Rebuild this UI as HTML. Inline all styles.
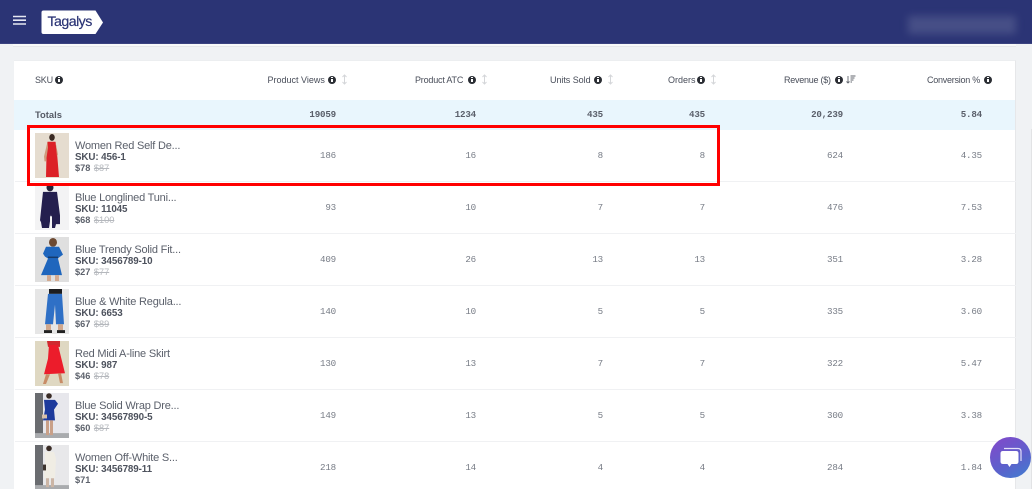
<!DOCTYPE html>
<html><head><meta charset="utf-8">
<style>
*{box-sizing:border-box}
html,body{margin:0;padding:0;width:1032px;height:489px;overflow:hidden}
body{background:#f0f2f4;font-family:"Liberation Sans",sans-serif}
#w{left:0;top:0;width:1032px;height:489px;overflow:hidden;background:#f0f2f4;filter:blur(.3px)}
div,svg{position:absolute}
.t{white-space:nowrap;line-height:12px}
.h{font-size:9px;color:#484d59;top:73.500px;height:12px}
.m{font-family:"Liberation Mono",monospace;font-size:9.2px;letter-spacing:-.2px;text-align:right;width:60px;color:#777c86}
.b{font-weight:bold;color:#5a5f6a}
.n{left:75px;font-size:11px;letter-spacing:-.2px;color:#5b606b}
.s{left:75px;font-size:9.8px;font-weight:bold;letter-spacing:-.1px;color:#4d525d}
.p{left:75px;font-size:9.2px;font-weight:bold;color:#5d626c}
.p span{font-weight:normal;color:#b5b8bd;text-decoration:line-through;margin-left:1px}
.sep{left:15px;width:1001px;height:1px;background:#f0f1f3}
.im{left:35px;width:34px;height:45px;filter:blur(.3px)}
.i{width:8px;height:8px;border-radius:50%;background:#2a2d33;top:75.500px}
.i:after{content:"";position:absolute;left:3.2px;top:3.2px;width:1.6px;height:3.2px;background:#fff}
.i:before{content:"";position:absolute;left:3.2px;top:1.2px;width:1.6px;height:1.3px;background:#fff}
.a{top:74px;width:7px;height:11px}
</style></head><body>
<div id="w">

<div style="left:13px;top:44px;width:1003px;height:3px;background:#f8f9f9;border-bottom:1px solid #e6e7e9"></div>
<div style="left:0;top:0;width:1032px;height:44px;background:#2b3475;border-bottom:1px solid #3b4380"></div>

<svg style="left:13px;top:15px" width="13" height="11" viewBox="0 0 13 11"><path d="M0 1.500H13M0 5.200H13M0 9H13" fill="none" stroke="#e6e8f2" stroke-width="1.600"/></svg>

<svg style="left:41px;top:10px" width="63" height="25" viewBox="0 0 63 25"><path d="M2.500 0.500H54.500L62 12.500L54.500 24H2.500Q0.500 24 0.500 22V2.500Q0.500 0.500 2.500 0.500Z" fill="#fff"/></svg>
<div class="t" style="left:47.500px;top:13px;font-size:14.200px;letter-spacing:-.55px;line-height:18px;color:#2b3475;-webkit-text-stroke:.2px #2b3475">Tagalys</div>

<div style="left:908px;top:16px;width:108px;height:18px;background:#525a8e;filter:blur(4px);opacity:.7"></div>

<div style="left:14px;top:60px;width:1002px;height:429px;background:#fff;border-right:1px solid #e6e7e9;border-top:1px solid #eceef0"></div>
<div style="left:14px;top:100px;width:1001px;height:30px;background:#e9f6fd"></div>
<div style="left:1031px;top:129px;width:1px;height:360px;background:#e2e3e5"></div>

<div class="t h" style="left:35px;letter-spacing:-.2px">SKU</div><div class="i" style="left:55px"></div>
<div class="t h" style="left:267.500px">Product Views</div><div class="i" style="left:328px"></div>
<div class="t h" style="left:415px;letter-spacing:-.2px">Product ATC</div><div class="i" style="left:468px"></div>
<div class="t h" style="left:550px;letter-spacing:-.05px">Units Sold</div><div class="i" style="left:594px"></div>
<div class="t h" style="left:668px">Orders</div><div class="i" style="left:697px"></div>
<div class="t h" style="left:784px;letter-spacing:-.25px">Revenue ($)</div><div class="i" style="left:835px"></div>
<div class="t h" style="left:927px;letter-spacing:-.25px">Conversion %</div><div class="i" style="left:984px"></div>

<svg class="a" style="left:341px" viewBox="0 0 7 11"><path d="M3.500 1V10M1.500 3L3.500 1L5.500 3M1.500 8L3.500 10L5.500 8" fill="none" stroke="#d4d6d9" stroke-width="1"/></svg>
<svg class="a" style="left:481px" viewBox="0 0 7 11"><path d="M3.500 1V10M1.500 3L3.500 1L5.500 3M1.500 8L3.500 10L5.500 8" fill="none" stroke="#d4d6d9" stroke-width="1"/></svg>
<svg class="a" style="left:607px" viewBox="0 0 7 11"><path d="M3.500 1V10M1.500 3L3.500 1L5.500 3M1.500 8L3.500 10L5.500 8" fill="none" stroke="#d4d6d9" stroke-width="1"/></svg>
<svg class="a" style="left:710px" viewBox="0 0 7 11"><path d="M3.500 1V10M1.500 3L3.500 1L5.500 3M1.500 8L3.500 10L5.500 8" fill="none" stroke="#d4d6d9" stroke-width="1"/></svg>
<svg style="left:846px;top:75px" width="10" height="9" viewBox="0 0 10 9"><path d="M2 1V8M0.500 6.500L2 8L3.500 6.500M4.500 1H9.500M4.500 3H8.500M4.500 5H7.500M4.500 7H6" fill="none" stroke="#62666e" stroke-width=".9"/></svg>

<div class="t" style="left:35px;top:109px;font-size:9.4px;font-weight:bold;color:#555a65">Totals</div>
<div class="t m b" style="left:276px;top:109px">19059</div>
<div class="t m b" style="left:416px;top:109px">1234</div>
<div class="t m b" style="left:543px;top:109px">435</div>
<div class="t m b" style="left:645px;top:109px">435</div>
<div class="t m b" style="left:783px;top:109px">20,239</div>
<div class="t m b" style="left:922px;top:109px">5.84</div>

<div class="sep" style="top:181px"></div>
<div class="sep" style="top:233px"></div>
<div class="sep" style="top:285px"></div>
<div class="sep" style="top:337px"></div>
<div class="sep" style="top:389px"></div>
<div class="sep" style="top:441px"></div>

<!-- row 1 -->
<svg class="im" style="top:133px" viewBox="0 0 34 46" preserveAspectRatio="none"><rect width="34" height="46" fill="#e5dccf"/><ellipse cx="17" cy="4.500" rx="2.800" ry="3.500" fill="#3a2a22"/><path d="M12.500 9H20.500L22 20L24 45H11L11.500 22Z" fill="#dc2027"/><path d="M12.500 9L9 24L9.500 29L11 29L13 15ZM20.500 9L23 22L22 24Z" fill="#cf9a7c"/></svg>
<div class="t n" style="top:139.500px">Women Red Self De...</div>
<div class="t s" style="top:151.500px">SKU: 456-1</div>
<div class="t p" style="top:162px">$78 <span>$87</span></div>
<div class="t m" style="left:276px;top:150px">186</div>
<div class="t m" style="left:416px;top:150px">16</div>
<div class="t m" style="left:543px;top:150px">8</div>
<div class="t m" style="left:645px;top:150px">8</div>
<div class="t m" style="left:783px;top:150px">624</div>
<div class="t m" style="left:922px;top:150px">4.35</div>

<!-- row 2 -->
<svg class="im" style="top:185px" viewBox="0 0 34 46" preserveAspectRatio="none"><rect width="34" height="46" fill="#f3f3f4"/><ellipse cx="15" cy="2.500" rx="3.500" ry="4" fill="#262338"/><path d="M8 7H22L25 31L25 40H21L20 44H17L16 30L14 44H7L6 38L5 36Z" fill="#241f4e"/><rect x="15" y="32" width="2" height="12" fill="#f3f3f4"/></svg>
<div class="t n" style="top:191.500px">Blue Longlined Tuni...</div>
<div class="t s" style="top:203.500px">SKU: 11045</div>
<div class="t p" style="top:214px">$68 <span>$100</span></div>
<div class="t m" style="left:276px;top:202px">93</div>
<div class="t m" style="left:416px;top:202px">10</div>
<div class="t m" style="left:543px;top:202px">7</div>
<div class="t m" style="left:645px;top:202px">7</div>
<div class="t m" style="left:783px;top:202px">476</div>
<div class="t m" style="left:922px;top:202px">7.53</div>

<!-- row 3 -->
<svg class="im" style="top:237px" viewBox="0 0 34 46" preserveAspectRatio="none"><rect width="34" height="46" fill="#dfdfdf"/><ellipse cx="18" cy="5.500" rx="4" ry="4.500" fill="#6d4a32"/><path d="M11 10H24L28 18L24 21L23 22L27 39H6L13 22L10 20L8 17Z" fill="#1f66bd"/><path d="M12 39H16V45H12ZM20 39H24V45H20Z" fill="#d3aa90"/><rect x="13" y="20" width="10" height="1.500" fill="#173b6b"/></svg>
<div class="t n" style="top:243.500px">Blue Trendy Solid Fit...</div>
<div class="t s" style="top:255.500px">SKU: 3456789-10</div>
<div class="t p" style="top:266px">$27 <span>$77</span></div>
<div class="t m" style="left:276px;top:254px">409</div>
<div class="t m" style="left:416px;top:254px">26</div>
<div class="t m" style="left:543px;top:254px">13</div>
<div class="t m" style="left:645px;top:254px">13</div>
<div class="t m" style="left:783px;top:254px">351</div>
<div class="t m" style="left:922px;top:254px">3.28</div>

<!-- row 4 -->
<svg class="im" style="top:289px" viewBox="0 0 34 46" preserveAspectRatio="none"><rect width="34" height="46" fill="#e6e6e6"/><rect x="14" y="0" width="13" height="5" fill="#1d1d1f"/><path d="M13 5H27L29 36H21L20 16L18 36H10Z" fill="#2f70c6"/><path d="M11 36H16V42H11ZM23 36H28V42H23Z" fill="#d0a78c"/><path d="M9 42H17V45H9ZM22 42H30V45H22Z" fill="#222"/></svg>
<div class="t n" style="top:295.500px">Blue &amp; White Regula...</div>
<div class="t s" style="top:307.500px">SKU: 6653</div>
<div class="t p" style="top:318px">$67 <span>$89</span></div>
<div class="t m" style="left:276px;top:306px">140</div>
<div class="t m" style="left:416px;top:306px">10</div>
<div class="t m" style="left:543px;top:306px">5</div>
<div class="t m" style="left:645px;top:306px">5</div>
<div class="t m" style="left:783px;top:306px">335</div>
<div class="t m" style="left:922px;top:306px">3.60</div>

<!-- row 5 -->
<svg class="im" style="top:341px" viewBox="0 0 34 46" preserveAspectRatio="none"><rect width="34" height="46" fill="#dfd8c2"/><path d="M12 0H25V6H13Z" fill="#cf2a30"/><path d="M14 4H23L30 33L9 34L13 18Z" fill="#ec1c2b"/><path d="M11 34L8 44H11L15 34ZM23 33L25 43H28L26 33Z" fill="#c88c66"/></svg>
<div class="t n" style="top:347.500px">Red Midi A-line Skirt</div>
<div class="t s" style="top:359.500px">SKU: 987</div>
<div class="t p" style="top:370px">$46 <span>$78</span></div>
<div class="t m" style="left:276px;top:358px">130</div>
<div class="t m" style="left:416px;top:358px">13</div>
<div class="t m" style="left:543px;top:358px">7</div>
<div class="t m" style="left:645px;top:358px">7</div>
<div class="t m" style="left:783px;top:358px">322</div>
<div class="t m" style="left:922px;top:358px">5.47</div>

<!-- row 6 -->
<svg class="im" style="top:393px" viewBox="0 0 34 46" preserveAspectRatio="none"><rect width="34" height="46" fill="#e7e7ec"/><rect width="8" height="46" fill="#6a6c70"/><rect y="41" width="34" height="5" fill="#a9abae"/><circle cx="14" cy="3" r="2.800" fill="#3a2c26"/><path d="M9 7H20L23 11L19 17L20 28H8L10 17Z" fill="#1d3a9c"/><path d="M11 28H14V43H11ZM15 28H18V43H15Z" fill="#c9a088"/><rect x="7" y="22" width="5" height="4" fill="#d8c0a8"/></svg>
<div class="t n" style="top:399.500px">Blue Solid Wrap Dre...</div>
<div class="t s" style="top:411.500px">SKU: 34567890-5</div>
<div class="t p" style="top:422px">$60 <span>$87</span></div>
<div class="t m" style="left:276px;top:410px">149</div>
<div class="t m" style="left:416px;top:410px">13</div>
<div class="t m" style="left:543px;top:410px">5</div>
<div class="t m" style="left:645px;top:410px">5</div>
<div class="t m" style="left:783px;top:410px">300</div>
<div class="t m" style="left:922px;top:410px">3.38</div>

<!-- row 7 -->
<svg class="im" style="top:445px" viewBox="0 0 34 46" preserveAspectRatio="none"><rect width="34" height="46" fill="#e8e8ea"/><rect width="8" height="46" fill="#6a6c70"/><rect y="41" width="34" height="5" fill="#a9abae"/><circle cx="14" cy="3.500" r="2.800" fill="#3a2c26"/><path d="M10 7H19L21 14L20 34H9L10 16Z" fill="#f0ede4"/><path d="M11 34H14V43H11ZM16 34H19V43H16Z" fill="#cbb5a5"/><rect x="8" y="20" width="3" height="6" fill="#3d332d"/></svg>
<div class="t n" style="top:451.500px">Women Off-White S...</div>
<div class="t s" style="top:463.500px">SKU: 3456789-11</div>
<div class="t p" style="top:474px">$71</div>
<div class="t m" style="left:276px;top:462px">218</div>
<div class="t m" style="left:416px;top:462px">14</div>
<div class="t m" style="left:543px;top:462px">4</div>
<div class="t m" style="left:645px;top:462px">4</div>
<div class="t m" style="left:783px;top:462px">284</div>
<div class="t m" style="left:922px;top:462px">1.84</div>

<!-- highlight -->
<div style="left:27px;top:125px;width:693px;height:61px;border:3px solid #ff0000"></div>

<!-- chat bubble -->
<div style="left:990px;top:437px;width:40.500px;height:41px;border-radius:50%;background:linear-gradient(150deg,#7a4ecb 15%,#5b62cc 60%,#3f7fd0 100%)"></div>
<svg style="left:999px;top:446px" width="24" height="24" viewBox="0 0 24 24"><path d="M5 2.500H19Q22 2.500 22 5.500V15" fill="none" stroke="#e4e0f8" stroke-width="1.200"/><path d="M4 5H17Q19.500 5 19.500 7.500V15.500Q19.500 18 17 18H12.500L10.500 21L8.500 18H4Q1.500 18 1.500 15.500V7.500Q1.500 5 4 5Z" fill="#fff"/></svg>

</div>
</body></html>
